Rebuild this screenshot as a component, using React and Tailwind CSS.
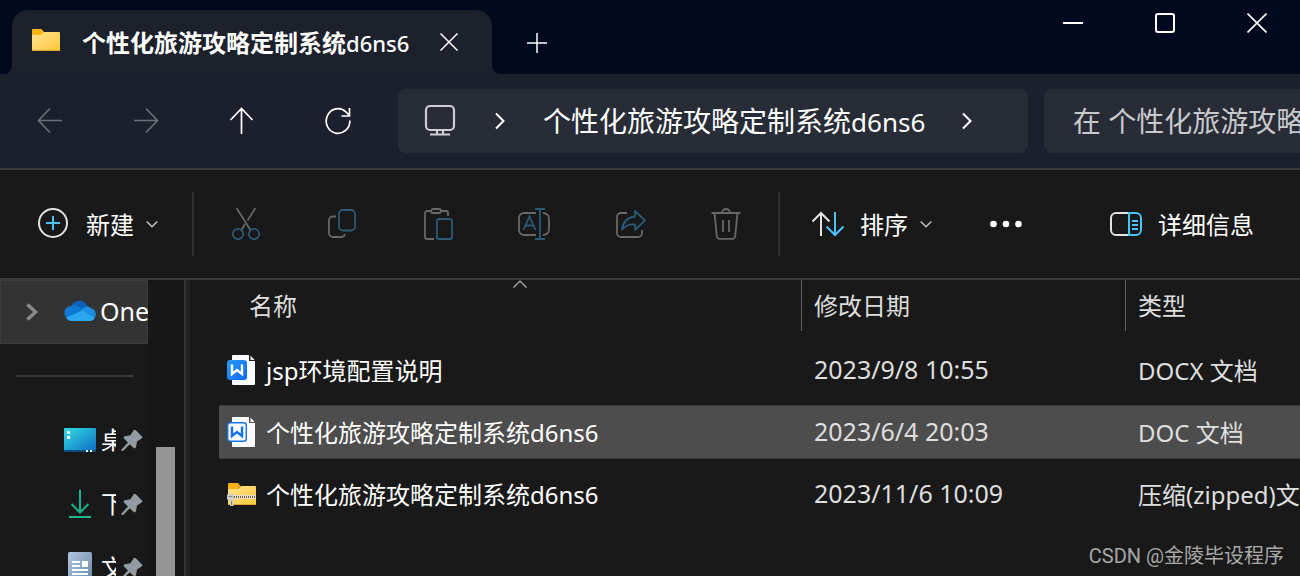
const files = [
    { id: 1, name: "jsp环境配置说明", date: "2023/9/8 10:55", type: "DOCX 文档", icon: DocxIcon },
    { id: 2, name: "个性化旅游攻略定制系统d6ns6", date: "2023/6/4 20:03", type: "DOC 文档", icon: DocIcon, selected: true },
    { id: 3, name: "个性化旅游攻略定制系统d6ns6", date: "2023/11/6 10:09", type: "压缩(zipped)文件夹", icon: ZipIcon },
];

const quickAccess = [
    { id: "desktop", name: "桌面", icon: DesktopIcon },
    { id: "downloads", name: "下载", icon: DownloadIcon },
    { id: "documents", name: "文档", icon: DocumentsIcon },
];

const fileActions = [
    { id: "cut", label: "剪切", icon: CutIcon },
    { id: "copy", label: "复制", icon: CopyIcon },
    { id: "paste", label: "粘贴", icon: PasteIcon },
    { id: "rename", label: "重命名", icon: RenameIcon },
    { id: "share", label: "共享", icon: ShareIcon },
    { id: "delete", label: "删除", icon: DeleteIcon },
];

function FolderIcon() {
    return (
        <svg width="30" height="28" viewBox="0 0 30 28" className="shrink-0">
            <defs>
                <linearGradient id="folder" x1="0" y1="0" x2="1" y2="1">
                    <stop offset="0" stopColor="#ffe394" />
                    <stop offset="1" stopColor="#ffc937" />
                </linearGradient>
            </defs>
            <path d="M1 2a1 1 0 0 1 1-1h8.500l2.500 3-2.500 4H1z" fill="#fdb614" />
            <path d="M1 7h9l3-3h15a1 1 0 0 1 1 1v17a1 1 0 0 1-1 1H2a1 1 0 0 1-1-1z" fill="url(#folder)" />
            <path d="M1 22h28a1 1 0 0 1-1 1H2a1 1 0 0 1-1-1z" fill="#e7a52c" />
        </svg>
    );
}

function CloseIcon({ size }) {
    return (
        <svg width={size} height={size} viewBox="0 0 20 20" fill="none" stroke="currentColor" strokeWidth="1.600">
            <path d="M0.500 0.500l19 19M19.500 0.500l-19 19" />
        </svg>
    );
}

function ChevronDown() {
    return (
        <svg width="12" height="12" viewBox="0 0 12 12" fill="none" stroke="#c4c4c4" strokeWidth="1.500">
            <path d="M0.700 3.500L6 8.700l5.300-5.200" />
        </svg>
    );
}

function ChevronRight() {
    return (
        <svg width="10" height="18" viewBox="0 0 10 18" fill="none" stroke="currentColor" strokeWidth="2" className="shrink-0">
            <path d="M1 1.500L8.500 9 1 16.500" />
        </svg>
    );
}

function CutIcon() {
    return (
        <svg width="32" height="34" viewBox="0 0 32 34" fill="none" strokeWidth="1.700">
            <path d="M6.500 1L20.500 23M25.500 1L17.500 13.500M15 17l-3.500 6" stroke="#686868" />
            <circle cx="8" cy="27" r="5.200" stroke="#2b5a78" />
            <circle cx="24" cy="27" r="5.200" stroke="#2b5a78" />
        </svg>
    );
}

function CopyIcon() {
    return (
        <svg width="32" height="34" viewBox="0 0 32 34" fill="none" strokeWidth="1.800">
            <path d="M10 9.500H7a4 4 0 0 0-4 4v12.500a4 4 0 0 0 4 4h8a4 4 0 0 0 4-3" stroke="#686868" />
            <rect x="13" y="3" width="16" height="20.500" rx="4" stroke="#2b5a78" />
        </svg>
    );
}

function PasteIcon() {
    return (
        <svg width="32" height="34" viewBox="0 0 32 34" fill="none" strokeWidth="1.800">
            <path d="M8 4H5a2 2 0 0 0-2 2v24a2 2 0 0 0 2 2h7M19 4h5a2 2 0 0 1 2 2v3" stroke="#686868" />
            <rect x="9" y="2" width="10" height="4" rx="2" stroke="#686868" />
            <rect x="15" y="12" width="15" height="20" rx="2" stroke="#2b5a78" />
        </svg>
    );
}

function RenameIcon() {
    return (
        <svg width="34" height="34" viewBox="0 0 34 34" fill="none" strokeWidth="1.800">
            <path d="M19 6H7a5 5 0 0 0-5 5v12a5 5 0 0 0 5 5h12M26 6a6 5 0 0 1 6 5v12a6 5 0 0 1-6 5" stroke="#686868" />
            <path d="M6.500 23L12.500 9.500 18.500 23M8.500 18.500h8M18 2h10M23 2v30M18 32h10" stroke="#2b5a78" />
        </svg>
    );
}

function ShareIcon() {
    return (
        <svg width="32" height="34" viewBox="0 0 32 34" fill="none" strokeWidth="1.800">
            <path d="M13 6H7a4 4 0 0 0-4 4v16a4 4 0 0 0 4 4h17a4 4 0 0 0 4-4v-3" stroke="#686868" />
            <path d="M21 4l10 9.500L21 23v-5.500c-6-1-9.500 1-13 5C9 15 13 10.500 21 9.500z" stroke="#2b5a78" strokeLinejoin="round" />
        </svg>
    );
}

function DeleteIcon() {
    return (
        <svg width="32" height="34" viewBox="0 0 32 34" fill="none" stroke="#686868" strokeWidth="1.800">
            <path d="M1.500 6h29M12 6a4 4 0 0 1 8 0M4.500 6l2.300 23a3 3 0 0 0 3 2.800h12.400a3 3 0 0 0 3-2.800L27.500 6M13 13v12M19 13v12" />
        </svg>
    );
}

function OneDriveIcon() {
    return (
        <svg width="32" height="24" viewBox="0 0 32 24" className="shrink-0">
            <path d="M7 6.500C10-.5 20-1.500 23.500 6L27 9 13 13z" fill="#0a5fb8" />
            <path d="M7 6c3-1.200 6-.6 8 .7l9 6L3.500 18.500C-2 15 0 6.500 7 6z" fill="#0f7ad6" />
            <path d="M17 10.500c3-5 9-4 10-2.200 4.500 1 6 6 3.800 9.500l-8-2z" fill="#1b8fe4" />
            <path d="M2 17.500L18.500 10.500l12.300 7.500c-1 2-3 3-5 3H7.500c-2.500 0-4.500-1.500-5.500-3.500z" fill="#2aa7ee" />
        </svg>
    );
}

function DesktopIcon() {
    return (
        <svg width="32" height="24" viewBox="0 0 32 24" className="shrink-0">
            <defs>
                <linearGradient id="desktop" x1="0" y1="0" x2="1" y2="1">
                    <stop offset="0" stopColor="#35dce3" />
                    <stop offset="1" stopColor="#0b6cc4" />
                </linearGradient>
            </defs>
            <rect width="32" height="24" rx="1" fill="url(#desktop)" />
            <path d="M0 22h32v1a1 1 0 0 1-1 1H1a1 1 0 0 1-1-1z" fill="#0c4a78" />
            <path d="M3 3h3v3H3zM3 8h3v3H3zM22 22h2v2h-2zM26 22h2v2h-2z" fill="#f2fdff" />
        </svg>
    );
}

function DownloadIcon() {
    return (
        <svg width="32" height="30" viewBox="0 0 32 30" fill="none" strokeWidth="2" className="shrink-0">
            <path d="M16 1v22M7.500 15l8.500 8.500 8.500-8.500" stroke="#18b394" />
            <path d="M5 28h22" stroke="#22b58a" />
        </svg>
    );
}

function DocumentsIcon() {
    return (
        <svg width="32" height="32" viewBox="0 0 32 32" className="shrink-0">
            <defs>
                <linearGradient id="documents" x1="0" y1="0" x2="1" y2="1">
                    <stop offset="0" stopColor="#b3c6dc" />
                    <stop offset="1" stopColor="#6484a5" />
                </linearGradient>
            </defs>
            <rect x="4" width="24" height="32" rx="1.500" fill="url(#documents)" />
            <path d="M8 9h8v2H8zM8 13h8v2H8zM18 9h6v6h-6zM8 17h16v2H8zM8 21h16v2H8z" fill="#fff" />
        </svg>
    );
}

function PinIcon() {
    return (
        <svg width="22" height="22" viewBox="0 0 22 22" className="shrink-0" fill="#929ca2">
            <path d="M12.500 1.500a1.500 1.500 0 0 1 2.300-.2l6 6a1.500 1.500 0 0 1-.3 2.300L16 12.500l-1 5.500a1.500 1.500 0 0 1-2.600.7L8.800 15.300 2 22H0.500v-1.500L7 13.600 3.200 9.800A1.500 1.500 0 0 1 4 7.200l5.500-1z" />
        </svg>
    );
}

function DocxIcon() {
    return (
        <svg width="30" height="32" viewBox="0 0 30 32" className="shrink-0">
            <defs>
                <linearGradient id="docx" x1="0" y1="0" x2="1" y2="1">
                    <stop offset="0" stopColor="#2b9bff" />
                    <stop offset="1" stopColor="#1068f2" />
                </linearGradient>
            </defs>
            <path d="M6 1h16v6h6v23a1 1 0 0 1-1 1H6a1 1 0 0 1-1-1V2a1 1 0 0 1 1-1z" fill="#fbfcff" />
            <path d="M23.500 1.500L27.500 6h-4z" fill="#fff" />
            <rect y="6" width="20" height="20" rx="3" fill="url(#docx)" />
            <path d="M5 10.500v9.500l5-4 5 4v-9.500" fill="none" stroke="#fff" strokeWidth="2.400" />
        </svg>
    );
}

function DocIcon() {
    return (
        <svg width="30" height="32" viewBox="0 0 30 32" className="shrink-0">
            <path d="M6 1h16v6h6v23a1 1 0 0 1-1 1H6a1 1 0 0 1-1-1V2a1 1 0 0 1 1-1z" fill="#fbfcff" />
            <path d="M23.500 1.500L27.500 6h-4z" fill="#fff" />
            <rect x="0.700" y="6.700" width="18.600" height="18.600" rx="2.500" fill="#fff" stroke="#1470f5" strokeWidth="1.400" />
            <path d="M5 10.500v9.500l5-4 5 4v-9.500" fill="none" stroke="#1470f5" strokeWidth="2.400" />
        </svg>
    );
}

function ZipIcon() {
    return (
        <svg width="30" height="26" viewBox="0 0 30 26" className="shrink-0">
            <path d="M1 3a1 1 0 0 1 1-1h9l2.500 3-2.500 3H1z" fill="#f9ae12" />
            <path d="M1 8h10l3-3h14a1 1 0 0 1 1 1v18H1z" fill="url(#folder)" />
            <path d="M1 23h28v1H1z" fill="#e7a52c" />
            <path d="M6 14h23v1H6zM6 17h23v1H6z" fill="#e3dcc8" />
            <path d="M7 16h22" stroke="#efe9da" strokeWidth="2" />
            <path d="M7 16h22" stroke="#6f5a2a" strokeWidth="2" strokeDasharray="1 1" />
            <path d="M0 13.500h7v5H6.500V25H3v-6.500H0z" fill="#cfcfcf" />
            <path d="M1.500 15.500h4M4.500 20v4" stroke="#8a867f" />
        </svg>
    );
}

function TitleBar() {
    return (
        <header className="flex h-[74px] shrink-0 bg-[#00091e] pl-1">
            <div className="flex items-end">
                <svg width="8" height="8" viewBox="0 0 8 8" fill="#1c212c">
                    <path d="M8 0v8H0a8 8 0 0 0 8-8z" />
                </svg>
                <div className="flex h-16 w-[480px] items-center rounded-t-2xl bg-[#1c212c] pr-[34px] pl-[19px]">
                    <FolderIcon />
                    <h1 className="ml-[21px] flex-1 pt-0.5 text-2xl font-bold whitespace-nowrap">
                        个性化旅游攻略定制系统<span className="text-[22px] font-medium">d6ns6</span>
                    </h1>
                    <button type="button" aria-label="关闭标签页">
                        <CloseIcon size={18} />
                    </button>
                </div>
                <svg width="8" height="8" viewBox="0 0 8 8" fill="#1c212c">
                    <path d="M0 0v8h8a8 8 0 0 1-8-8z" />
                </svg>
            </div>
            <button type="button" aria-label="新标签页" className="mt-3 ml-[26px] self-center">
                <svg width="22" height="22" viewBox="0 0 22 22" stroke="currentColor" strokeWidth="1.500">
                    <path d="M11 1v20M1 11h20" />
                </svg>
            </button>
            <div className="ml-auto flex h-[46px] items-center gap-[72px] pr-[33px]">
                <button type="button" aria-label="最小化">
                    <svg width="20" height="20" viewBox="0 0 20 20" stroke="currentColor" strokeWidth="2">
                        <path d="M0 10h20" />
                    </svg>
                </button>
                <button type="button" aria-label="最大化">
                    <svg width="20" height="20" viewBox="0 0 20 20" fill="none" stroke="currentColor" strokeWidth="2">
                        <rect x="1" y="1" width="18" height="18" rx="2" />
                    </svg>
                </button>
                <button type="button" aria-label="关闭">
                    <CloseIcon size={20} />
                </button>
            </div>
        </header>
    );
}

function NavButton({ label, disabled, children }) {
    return (
        <button
            type="button"
            aria-label={label}
            disabled={disabled}
            className={`flex h-16 w-24 shrink-0 items-center justify-center ${disabled ? "text-[#6b6f77]" : "text-white"}`}
        >
            <svg width="26" height="28" viewBox="0 0 26 28" fill="none" stroke="currentColor" strokeWidth="1.700">
                {children}
            </svg>
        </button>
    );
}

function AddressBar() {
    return (
        <div className="flex h-24 shrink-0 items-center border-b-2 border-[#3c3c3e] bg-[#1b202c] pl-0.5">
            <NavButton label="后退" disabled>
                <path d="M25 13.500H1.500M13 1.500l-11.500 12 11.500 12" />
            </NavButton>
            <NavButton label="前进" disabled>
                <path d="M1 13.500h23.500M13 1.500l11.500 12-11.500 12" />
            </NavButton>
            <NavButton label="上移">
                <path d="M12.500 27V1.500M1.500 13l11-11.500 11 11.500" />
            </NavButton>
            <NavButton label="刷新">
                <path d="M24.800 13.500A11.800 12.300 0 1 1 21 5l3.500 3.500M24.500 1v8H16.500" />
            </NavButton>
            <nav className="ml-3 flex h-16 flex-1 items-center rounded-lg bg-[#272c37] pl-[26px]">
                <svg width="32" height="34" viewBox="0 0 32 34" fill="none" stroke="#cdced2" strokeWidth="2.200" className="shrink-0">
                    <rect x="2" y="2" width="28" height="24" rx="4" />
                    <path d="M6 30.500h20M13 26v4M19 26v4" />
                </svg>
                <span className="ml-[39px] flex">
                    <ChevronRight />
                </span>
                <a href="#folder" className="mr-[37px] ml-[38px] text-[28px] whitespace-nowrap">
                    个性化旅游攻略定制系统<span className="text-[26px]">d6ns6</span>
                </a>
                <ChevronRight />
            </nav>
            <input
                type="text"
                aria-label="搜索"
                placeholder="在 个性化旅游攻略定制系统d6ns6 中搜索"
                className="ml-4 h-16 w-64 rounded-l-lg bg-[#272c37] pl-[29px] text-[28px] outline-none placeholder:text-[#c8c9cc]"
            />
        </div>
    );
}

function Toolbar() {
    return (
        <div className="flex h-[110px] shrink-0 items-center border-b-2 border-[#3a3a3a] text-2xl whitespace-nowrap">
            <button type="button" className="flex items-center pl-[37px]">
                <svg width="32" height="32" viewBox="0 0 32 32" fill="none" strokeWidth="2">
                    <circle cx="16" cy="15" r="14" stroke="#e2e2e2" />
                    <path d="M16 8v14M9 15h14" stroke="#4cc2ff" />
                </svg>
                <span className="mr-3 ml-[17px] pt-0.5">新建</span>
                <ChevronDown />
            </button>
            <div className="mr-1 ml-[34px] h-16 w-0.5 bg-[#2f2f2f]" />
            {fileActions.map((action) => (
                <button key={action.id} type="button" aria-label={action.label} disabled className="flex h-16 w-24 items-center justify-center">
                    <action.icon />
                </button>
            ))}
            <div className="mr-8 ml-1 h-16 w-0.5 bg-[#2f2f2f]" />
            <button type="button" className="flex items-center">
                <svg width="32" height="26" viewBox="0 0 32 26" fill="none" strokeWidth="2">
                    <path d="M9 25V2M0.500 10.500L9 2l8.500 8.500" stroke="#e2e2e2" />
                    <path d="M23 1v23M14.500 15.500L23 24l8.500-8.500" stroke="#4cc2ff" />
                </svg>
                <span className="mr-3 ml-4 pt-0.5">排序</span>
                <ChevronDown />
            </button>
            <button type="button" aria-label="查看更多" className="ml-[58px]">
                <svg width="32" height="8" viewBox="0 0 32 8" fill="currentColor">
                    <circle cx="3.500" cy="4" r="3.300" />
                    <circle cx="16" cy="4" r="3.300" />
                    <circle cx="28.500" cy="4" r="3.300" />
                </svg>
            </button>
            <button type="button" className="ml-auto flex items-center gap-4 pr-[46px]">
                <svg width="32" height="24" viewBox="0 0 32 24" fill="none" strokeWidth="2">
                    <path d="M19 1H6a5 5 0 0 0-5 5v12a5 5 0 0 0 5 5h13" stroke="#e2e2e2" />
                    <path d="M19 1h7a5 5 0 0 1 5 5v12a5 5 0 0 1-5 5h-7zM22 9h6M22 13h6M22 17h6" stroke="#4cc2ff" />
                </svg>
                <span className="pt-0.5">详细信息</span>
            </button>
        </div>
    );
}

function Sidebar() {
    return (
        <aside className="flex w-[190px] shrink-0 overflow-hidden border-r-4 border-[#202020] text-2xl">
            <div className="w-[148px] shrink-0 overflow-hidden whitespace-nowrap">
                <a href="#onedrive" className="flex h-16 items-center border border-[#3d3d3d] bg-[#333] pl-6 text-[25px]">
                    <svg width="14" height="18" viewBox="0 0 14 18" fill="none" stroke="#8a8a8a" strokeWidth="3.500" className="shrink-0">
                        <path d="M2.500 1.500L10.500 9l-8 7.500" />
                    </svg>
                    <span className="mr-1 ml-[25px]">
                        <OneDriveIcon />
                    </span>
                    OneDrive
                </a>
                <hr className="mt-[31px] mr-[15px] mb-[31px] ml-4 border-t-2 border-[#3a3a3a]" />
                {quickAccess.map((item) => (
                    <a key={item.id} href={`#${item.id}`} className="flex h-16 items-center pl-16">
                        <item.icon />
                        <span className="mr-[5px] ml-[5px] w-[15px] shrink-0 overflow-hidden">{item.name}</span>
                        <PinIcon />
                    </a>
                ))}
            </div>
            <div className="flex flex-1 flex-col border-r-2 border-[#333] bg-[#171717] pt-[167px] pl-2">
                <div className="w-[19px] flex-1 bg-[#959595]" />
            </div>
        </aside>
    );
}

function FileRow({ file }) {
    const cell = `flex h-[54px] items-center border-y ${file.selected ? "border-[#3a3a3a] bg-[#4d4d4d]" : "border-transparent"}`;

    return (
        <tr>
            <td className="py-1">
                <div className={`${cell} gap-[9px] pl-2 text-white`}>
                    <file.icon />
                    <span className="pt-0.5">{file.name}</span>
                </div>
            </td>
            <td className="py-1">
                <div className={`${cell} pl-[13px] text-[25px]`}>{file.date}</div>
            </td>
            <td className="py-1">
                <div className={`${cell} overflow-hidden pt-0.5 pl-[13px]`}>{file.type}</div>
            </td>
        </tr>
    );
}

function FileList() {
    return (
        <main className="flex min-w-0 flex-1 flex-col overflow-hidden pl-[29px]">
            <table className="w-full table-fixed text-left text-2xl whitespace-nowrap text-[#dedede]">
                <colgroup>
                    <col />
                    <col className="w-[324px]" />
                    <col className="w-[175px]" />
                </colgroup>
                <thead>
                    <tr>
                        <th className="pb-2 font-normal">
                            <div className="relative flex h-[51px] items-center pl-[30px]">
                                名称
                                <svg width="14" height="8" viewBox="0 0 14 8" fill="none" stroke="#b5b5b5" strokeWidth="1.200" className="absolute top-0 left-[294px]">
                                    <path d="M0.500 7.500L7 1l6.500 6.500" />
                                </svg>
                            </div>
                        </th>
                        <th className="pb-2 font-normal">
                            <div className="flex h-[51px] items-center border-l border-[#636363] pl-3">修改日期</div>
                        </th>
                        <th className="pb-2 font-normal">
                            <div className="flex h-[51px] items-center border-l border-[#636363] pl-3">类型</div>
                        </th>
                    </tr>
                </thead>
                <tbody>
                    {files.map((file) => (
                        <FileRow key={file.id} file={file} />
                    ))}
                </tbody>
            </table>
            <p className="mt-auto pr-4 pb-1.5 text-right font-[Roboto,'Noto_Sans_CJK_SC',sans-serif] text-xl text-[#a8a8a8]">CSDN @金陵毕设程序</p>
        </main>
    );
}

function App() {
    return (
        <div className="flex h-screen flex-col overflow-hidden bg-[#191919] font-['Noto_Sans','Noto_Sans_CJK_SC',sans-serif] text-white">
            <TitleBar />
            <AddressBar />
            <Toolbar />
            <div className="flex min-h-0 flex-1">
                <Sidebar />
                <FileList />
            </div>
        </div>
    );
}

export default App;
